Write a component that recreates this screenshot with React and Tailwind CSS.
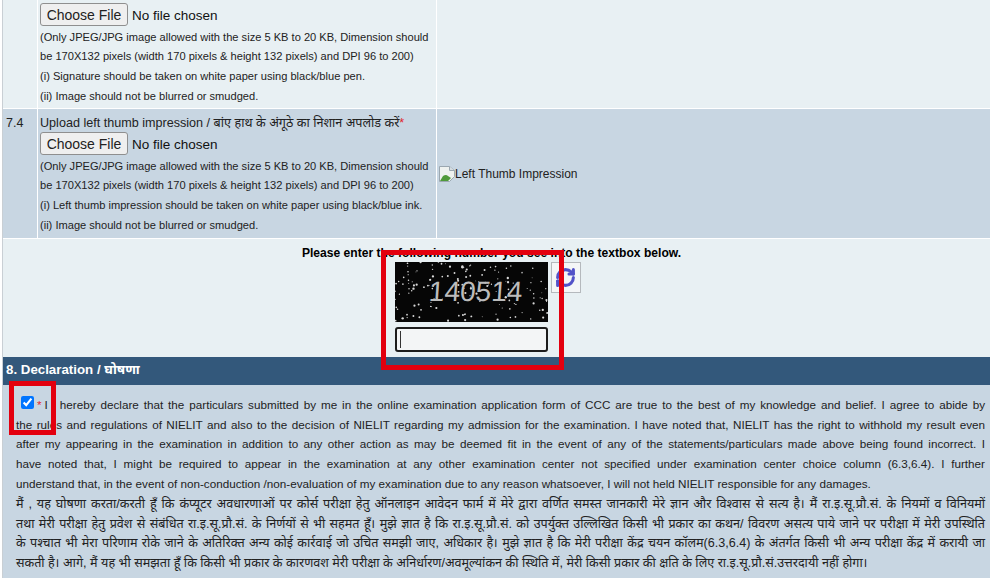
import React from "react";
import { RefreshCw } from "lucide-react";

const sans = { fontFamily: '"Liberation Sans", "Noto Sans", "Noto Sans Devanagari", "Lohit Devanagari", sans-serif' };

// fixed speckle for the captcha picture
const dots = [];
let seed = 7;
for (let i = 0; i < 150; i++) {
  seed = (seed * 9301 + 49297) % 233280;
  const x = (seed / 233280) * 153;
  seed = (seed * 9301 + 49297) % 233280;
  const y = (seed / 233280) * 60;
  seed = (seed * 9301 + 49297) % 233280;
  dots.push({ x, y, r: 0.45 + (seed / 233280) * 0.75 });
}

const english = [
  "hereby declare that the particulars submitted by me in the online examination application form of CCC are true to the best of my knowledge and belief. I agree to abide by",
  "the rules and regulations of NIELIT and also to the decision of NIELIT regarding my admission for the examination. I have noted that, NIELIT has the right to withhold my result even",
  "after my appearing in the examination in addition to any other action as may be deemed fit in the event of any of the statements/particulars made above being found incorrect. I",
  "have noted that, I might be required to appear in the examination at any other examination center not specified under examination center choice column (6.3,6.4). I further",
];

const hindi = [
  "मैं , यह घोषणा करता/करती  हूँ कि कंप्यूटर अवधारणाओं पर कोर्स परीक्षा हेतु ऑनलाइन आवेदन फार्म में मेरे द्वारा वर्णित समस्त जानकारी मेरे ज्ञान और विश्वास से सत्य है। मैं रा.इ.सू.प्रौ.सं. के नियमों व विनियमों",
  "तथा मेरी परीक्षा हेतु प्रवेश से संबंधित रा.इ.सू.प्रौ.सं. के निर्णयों से भी सहमत हूँ। मुझे ज्ञात है कि रा.इ.सू.प्रौ.सं. को उपर्युक्त उल्लिखित किसी भी प्रकार का कथन/ विवरण असत्य पाये जाने पर परीक्षा में मेरी उपस्थिति",
  "के पश्चात भी मेरा परिणाम रोके जाने के अतिरिक्त अन्य कोई कार्रवाई जो उचित समझी जाए, अधिकार है। मुझे ज्ञात है कि मेरी परीक्षा केंद्र चयन कॉलम(6.3,6.4) के अंतर्गत किसी भी अन्य परीक्षा केंद्र में करायी जा",
];

function BrokenImage() {
  return (
    <svg width="16" height="16" viewBox="0 0 16 16" className="shrink-0">
      <path d="M0.5 0.5h10l5 4v6l-5 5h-10z" fill="#eef2f0" stroke="#9aa7b0" strokeWidth="1" />
      <path d="M1 15l3-5q3-2 5 0l3 2-3 3z" fill="#4f9a3a" />
      <path d="M10.5 0.5v4h5" fill="#d5dde2" stroke="#9aa7b0" strokeWidth="1" />
    </svg>
  );
}

function UploadNotes({ first }) {
  return (
    <div className="text-[11.1px] leading-[19.7px] text-[#222]">
      <input type="file" className="block w-[300px] h-[23px] text-[13.5px] leading-[23px] text-[#111] file:h-[23px] file:w-[88px] file:mr-[4px] file:rounded-[3px] file:border file:border-[#8f8f8f] file:bg-[#efefef] file:text-[14px] file:text-[#222]" style={sans} />
      <div className="whitespace-nowrap mt-[1.5px]">(Only JPEG/JPG image allowed with the size 5 KB to 20 KB, Dimension should</div>
      <div className="whitespace-nowrap">be 170X132 pixels (width 170 pixels &amp; height 132 pixels) and DPI 96 to 200)</div>
      <div className="whitespace-nowrap">{first}</div>
      <div className="whitespace-nowrap">(ii) Image should not be blurred or smudged.</div>
    </div>
  );
}

export default function App() {
  return (
    <div className="relative w-[991px] h-[582px] overflow-hidden bg-white text-[#222]" style={sans}>
      <div className="ml-[2px] mr-px border-l border-[#c9cfd4]">
        {/* row 7.3, cut at the top */}
        <div className="flex h-[109px] bg-[#e8f0f3] border-b border-white">
          <div className="w-[35px] border-r border-white" />
          <div className="w-[399px] pl-[2px] pt-[3px] border-r border-white">
            <UploadNotes first="(i) Signature should be taken on white paper using black/blue pen." />
          </div>
          <div className="flex-1" />
        </div>

        {/* row 7.4 */}
        <div className="flex h-[130px] bg-[#c8d6e2] border-b border-white">
          <div className="w-[35px] pl-[3px] pt-[6px] text-[12.5px] leading-[16px] border-r border-white">7.4</div>
          <div className="w-[399px] pl-[2px] pt-[4px] border-r border-white">
            <div className="text-[12.6px] leading-[20px] -mb-px whitespace-nowrap">
              Upload left thumb impression / बांए हाथ के अंगूठे का निशान अपलोड करें<span className="text-[#e0262e]">*</span>
            </div>
            <UploadNotes first="(i) Left thumb impression should be taken on white paper using black/blue ink." />
          </div>
          <div className="flex-1 flex items-center pl-[2px] text-[12px] pt-px">
            <BrokenImage />
            <span>Left Thumb Impression</span>
          </div>
        </div>

        {/* captcha */}
        <div className="h-[118px] bg-[#e8f0f3] flex flex-col items-center pr-[10px]">
          <div className="text-[12.1px] leading-[16px] font-bold text-black mt-[6px]">Please enter the following number you see into the textbox below.</div>
          <div className="flex items-start mt-px mr-[8px] gap-[3px]">
            <div className="w-[153px]">
              <div className="relative w-[153px] h-[60px] bg-[#060606] overflow-hidden flex items-center justify-center pl-[10px]">
                <svg width="153" height="60" className="absolute inset-0">
                  {dots.map((d, i) => (
                    <circle key={i} cx={d.x} cy={d.y} r={d.r} fill="#d8d8d8" />
                  ))}
                </svg>
                <span className="relative text-[28px] text-[#bcbcbc] skew-x-[-4deg]">140514</span>
              </div>
              <div className="mt-[5px] h-[25px] bg-[#f3f5f6] border-2 border-[#1c1c1c] rounded-[3px] flex items-center pl-[3px]">
                <div className="w-px h-[17px] bg-[#333]" />
              </div>
            </div>
            <div className="w-[30px] h-[31px] bg-[#f4f6f7] border border-[#b5b9bd] flex items-center justify-center">
              <RefreshCw size={21} strokeWidth={3.5} className="text-[#5352c8]" />
            </div>
          </div>
        </div>

        {/* section header */}
        <div className="h-[28px] bg-[#33587b] text-white font-bold text-[13.3px] leading-[25px] pl-[3px]">8. Declaration / घोषणा</div>

        {/* declaration */}
        <div className="h-[193px] bg-[#c8d6e2] pl-[13px] pr-[5px] pt-[10px] text-[#222]">
          <div className="text-[11.7px] leading-[19.7px]">
            {english.map((line, i) => (
              <div key={i} className="[text-align-last:justify]">
                {i === 0 && (
                  <>
                    <input type="checkbox" defaultChecked className="w-[13px] h-[13px] align-[0px] ml-[5px] mr-[3px] accent-[#0075ff]" />
                    <span className="text-[#e0262e] mr-[3px]">*</span>
                    <span className="mr-[12px]">I</span>
                  </>
                )}
                {line}
              </div>
            ))}
            <div>understand that, in the event of non-conduction /non-evaluation of my examination due to any reason whatsoever, I will not held NIELIT responsible for any damages.</div>
          </div>
          <div className="text-[12.6px] leading-[19.6px] mt-[1.5px]">
            {hindi.map((line, i) => (
              <div key={i} className="[text-align-last:justify]">{line}</div>
            ))}
            <div>सकती है। आगे, मैं यह भी समझता हूँ कि किसी भी प्रकार के कारणवश मेरी परीक्षा के अनिर्धारण/अवमूल्यांकन की स्थिति में, मेरी किसी प्रकार की क्षति के लिए रा.इ.सू.प्रौ.सं.उत्तरदायी नहीं होगा।</div>
          </div>
        </div>
      </div>

      {/* red annotation boxes drawn over the page */}
      <div className="absolute left-[381px] top-[250px] w-[183px] h-[120px] border-[5px] border-[#e3000f]" />
      <div className="absolute left-[9px] top-[381px] w-[47px] h-[54px] border-[5px] border-[#e3000f]" />
    </div>
  );
}
